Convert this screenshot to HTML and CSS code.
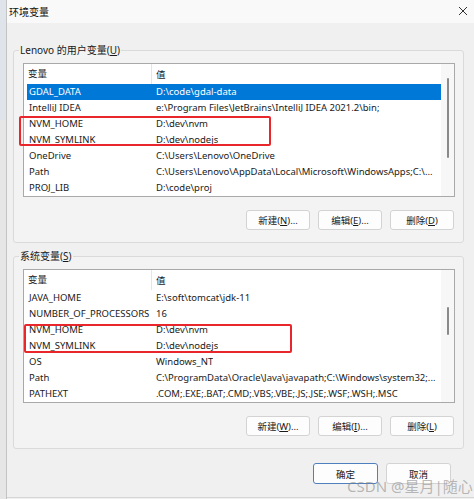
FILE: index.html
```html
<!DOCTYPE html>
<html lang="zh-CN">
  <head>
    <meta charset="UTF-8" />
    <meta name="viewport" content="width=device-width, initial-scale=1.0" />
    <title>环境变量</title>
    <link rel="stylesheet" href="styles.css">
  </head>
  <body>
    <div class="screen">
      <div class="behind"></div>

      <div class="dialog">
        <div class="titlebar">
          <span class="title">环境变量</span>
          <svg class="close" width="10" height="10" viewBox="0 0 10 10">
            <path d="M1 1 L9 9 M9 1 L1 9" stroke="#333" stroke-width="1" fill="none" />
          </svg>
        </div>

        <div class="content">
          <!-- 用户变量 -->
          <fieldset class="group">
            <legend>Lenovo 的用户变量(<u>U</u>)</legend>
            <div class="list">
              <div class="list-main">
                <div class="list-head">
                  <span class="col-name">变量</span>
                  <span class="col-value">值</span>
                </div>
                <div class="row selected"><span class="col-name">GDAL_DATA</span><span class="col-value">D:\code\gdal-data</span></div>
                <div class="row"><span class="col-name">IntelliJ IDEA</span><span class="col-value">e:\Program Files\JetBrains\IntelliJ IDEA 2021.2\bin;</span></div>
                <div class="row"><span class="col-name">NVM_HOME</span><span class="col-value">D:\dev\nvm</span></div>
                <div class="row"><span class="col-name">NVM_SYMLINK</span><span class="col-value">D:\dev\nodejs</span></div>
                <div class="row"><span class="col-name">OneDrive</span><span class="col-value">C:\Users\Lenovo\OneDrive</span></div>
                <div class="row"><span class="col-name">Path</span><span class="col-value">C:\Users\Lenovo\AppData\Local\Microsoft\WindowsApps;C:\...</span></div>
                <div class="row"><span class="col-name">PROJ_LIB</span><span class="col-value">D:\code\proj</span></div>
              </div>
              <div class="scrollbar"><div class="thumb thumb-user"></div></div>
              <div class="mark mark-user"></div>
            </div>
            <div class="buttons">
              <button class="btn">新建(<u>N</u>)...</button>
              <button class="btn">编辑(<u>E</u>)...</button>
              <button class="btn">删除(<u>D</u>)</button>
            </div>
          </fieldset>

          <!-- 系统变量 -->
          <fieldset class="group group-system">
            <legend>系统变量(<u>S</u>)</legend>
            <div class="list">
              <div class="list-main">
                <div class="list-head">
                  <span class="col-name">变量</span>
                  <span class="col-value">值</span>
                </div>
                <div class="row"><span class="col-name">JAVA_HOME</span><span class="col-value">E:\soft\tomcat\jdk-11</span></div>
                <div class="row"><span class="col-name">NUMBER_OF_PROCESSORS</span><span class="col-value">16</span></div>
                <div class="row"><span class="col-name">NVM_HOME</span><span class="col-value">D:\dev\nvm</span></div>
                <div class="row"><span class="col-name">NVM_SYMLINK</span><span class="col-value">D:\dev\nodejs</span></div>
                <div class="row"><span class="col-name">OS</span><span class="col-value">Windows_NT</span></div>
                <div class="row"><span class="col-name">Path</span><span class="col-value">C:\ProgramData\Oracle\Java\javapath;C:\Windows\system32;...</span></div>
                <div class="row"><span class="col-name">PATHEXT</span><span class="col-value">.COM;.EXE;.BAT;.CMD;.VBS;.VBE;.JS;.JSE;.WSF;.WSH;.MSC</span></div>
              </div>
              <div class="scrollbar"><div class="thumb thumb-system"></div></div>
              <div class="mark mark-system"></div>
            </div>
            <div class="buttons">
              <button class="btn">新建(<u>W</u>)...</button>
              <button class="btn">编辑(<u>I</u>)...</button>
              <button class="btn">删除(<u>L</u>)</button>
            </div>
          </fieldset>

          <div class="footer">
            <button class="btn btn-default">确定</button>
            <button class="btn">取消</button>
          </div>
        </div>

        <div class="watermark">CSDN @星月|随心</div>
      </div>
    </div>
  </body>
</html>
```

FILE: styles.css
```css
body {
  margin: 0;
  padding: 0;
  font-family: "Noto Sans", "Noto Sans CJK SC", sans-serif;
  font-size: 9.5px;
  color: #1a1a1a;
  background-color: #f0f0f0;
}

.screen {
  display: flex;
  width: 474px;
  height: 499px;
  overflow: hidden;
}

/* 后面窗口露出的一条 */
.behind {
  width: 6px;
  flex-shrink: 0;
  background: linear-gradient(#dfe4ea 0, #dfe4ea 120px, #e6e6e6 120px);
  border-right: 1px solid #c4c4c4;
}

.dialog {
  position: relative;
  flex: 1;
  min-width: 0;
  height: 497px;
  background-color: #f0f0f0;
  border-bottom: 1px solid #d6d6d6;
}

.titlebar {
  height: 23px;
  display: flex;
  align-items: center;
  justify-content: space-between;
  padding: 0 6px 0 2px;
  background-color: #f9f9f9;
}

.title {
  font-size: 10px;
  color: #111;
}

.close {
  margin-top: -1px;
}

.content {
  padding: 0 10px 0 6px;
}

.group {
  min-width: 0;
  margin: 20px 0 0 0;
  padding: 6px 8px 12px 9px;
  border: 1px solid #dadada;
  border-radius: 3px;
  background-color: #f3f3f3;
}

.group-system {
  margin-top: 6px;
}

.group legend {
  padding: 0 1px;
  margin-left: -4px;
  line-height: 14px;
  font-size: 10px;
  color: #1a1a1a;
}

.list {
  position: relative;
  display: flex;
  height: 132px;
  border: 1px solid #a9a9a9;
  background-color: #ffffff;
}

.list-main {
  flex: 1;
  min-width: 0;
  padding-left: 3px;
  overflow: hidden;
}

.list-head {
  display: flex;
  height: 20px;
  align-items: center;
}

.list-head .col-name {
  border-right: 1px solid #e5e5e5;
  height: 20px;
  line-height: 20px;
  padding-left: 1px;
}

.row {
  display: flex;
  height: 16px;
  line-height: 16px;
  white-space: nowrap;
}

.row .col-name {
  padding-left: 2px;
}

.col-name {
  width: 125px;
  flex-shrink: 0;
  box-sizing: border-box;
}

.col-value {
  padding-left: 4px;
  overflow: hidden;
}

.row.selected {
  background-color: #0078d7;
  color: #ffffff;
}

.scrollbar {
  position: relative;
  width: 13px;
  flex-shrink: 0;
  background-color: #f7f7f7;
}

.thumb {
  position: absolute;
  left: 6px;
  width: 2px;
  border-radius: 1px;
  background-color: #8a8a8a;
}

.thumb-user {
  top: 14px;
  height: 80px;
}

.thumb-system {
  top: 37px;
  height: 28px;
}

/* 红框标注 */
.mark {
  position: absolute;
  border: 2px solid #e8262c;
  border-radius: 2px;
}

.mark-user {
  left: -5px;
  top: 52px;
  width: 248px;
  height: 26px;
}

.mark-system {
  left: 0;
  top: 54px;
  width: 264px;
  height: 25px;
}

.buttons {
  display: flex;
  justify-content: flex-end;
  gap: 8px;
  margin-top: 13px;
  padding-right: 1px;
}

.btn {
  width: 64px;
  height: 20px;
  padding: 0;
  font-family: "Noto Sans", "Noto Sans CJK SC", sans-serif;
  font-size: 9.5px;
  color: #1a1a1a;
  background-color: #fdfdfd;
  border: 1px solid #d3d3d3;
  border-radius: 3px;
}

.btn-default {
  border: 1.5px solid #4f7fbd;
}

.footer {
  display: flex;
  justify-content: flex-end;
  gap: 8px;
  margin-top: 14px;
  padding-right: 13px;
}

.footer .btn {
  width: 65px;
  height: 21px;
}

.watermark {
  position: absolute;
  left: 340px;
  top: 475px;
  font-size: 15px;
  color: rgba(130, 130, 130, 0.55);
  white-space: nowrap;
}
```
